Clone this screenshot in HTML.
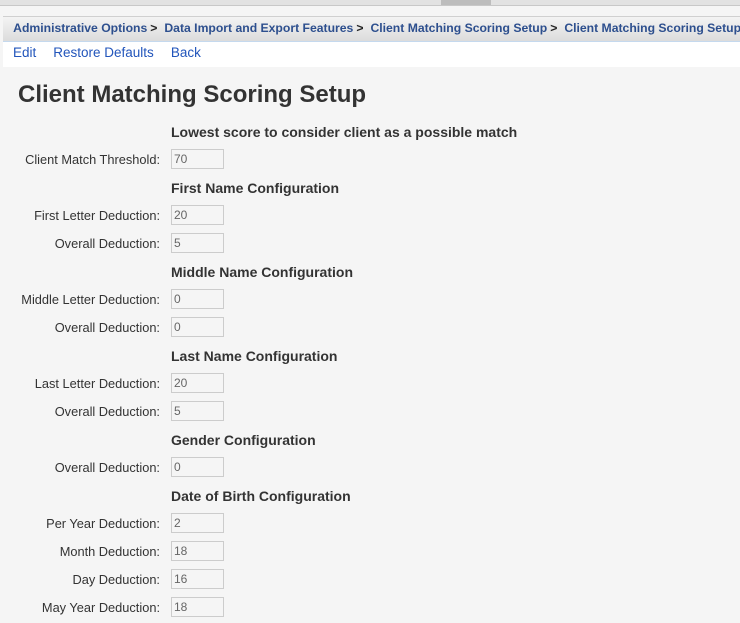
<!DOCTYPE html>
<html><head><style>
body{margin:0;width:740px;height:623px;background:#f5f5f5;font-family:"Liberation Sans",Arial,sans-serif;position:relative;overflow:hidden}
.top{position:absolute;left:0;top:0;width:740px;height:5px;background:#e2e2e2;border-bottom:1px solid #c8c8c8}
.tab{position:absolute;left:441px;top:0;width:50px;height:5px;background:#bdbdbd}
.bc{position:absolute;left:3px;top:16px;width:737px;height:24px;background:linear-gradient(#f4f4f4,#dcdcdc);border-top:1px solid #d0d0d0;border-bottom:2px solid #c5d9ee;font-size:12.2px;font-weight:bold;color:#2d4f8e;line-height:23px;white-space:nowrap;overflow:hidden}
.bc b{color:#222;margin:0 7px 0 3px}
.lk{position:absolute;left:3px;top:42px;width:737px;height:25px;background:#fff;font-size:13.5px;color:#2255bb;line-height:22px}
.lk span{margin-left:10px;margin-right:7px}
h1{position:absolute;left:18px;top:81px;margin:0;font-size:24px;font-weight:bold;color:#333}
.h{position:absolute;left:171px;font-size:14px;font-weight:bold;color:#333}
.l{position:absolute;right:580px;font-size:12.8px;color:#333}
.i{position:absolute;left:171px;height:18px;border:1px solid #ccc;background:#f5f5f5;font-size:12px;color:#666;line-height:18px;padding-left:2px;width:49px}
</style></head><body>
<div class="top"></div><div class="tab"></div>
<div class="bc">&nbsp;&nbsp;&nbsp;Administrative Options<b>&gt;</b>Data Import and Export Features<b>&gt;</b>Client Matching Scoring Setup<b>&gt;</b>Client Matching Scoring Setup</div>
<div class="lk"><span>Edit</span><span>Restore Defaults</span><span>Back</span></div>
<h1>Client Matching Scoring Setup</h1>
<div class="h" style="top:124px">Lowest score to consider client as a possible match</div>
<div class="l" style="top:152px">Client Match Threshold:</div><div class="i" style="top:149px">70</div>
<div class="h" style="top:180px">First Name Configuration</div>
<div class="l" style="top:208px">First Letter Deduction:</div><div class="i" style="top:205px">20</div>
<div class="l" style="top:236px">Overall Deduction:</div><div class="i" style="top:233px">5</div>
<div class="h" style="top:264px">Middle Name Configuration</div>
<div class="l" style="top:292px">Middle Letter Deduction:</div><div class="i" style="top:289px">0</div>
<div class="l" style="top:320px">Overall Deduction:</div><div class="i" style="top:317px">0</div>
<div class="h" style="top:348px">Last Name Configuration</div>
<div class="l" style="top:376px">Last Letter Deduction:</div><div class="i" style="top:373px">20</div>
<div class="l" style="top:404px">Overall Deduction:</div><div class="i" style="top:401px">5</div>
<div class="h" style="top:432px">Gender Configuration</div>
<div class="l" style="top:460px">Overall Deduction:</div><div class="i" style="top:457px">0</div>
<div class="h" style="top:488px">Date of Birth Configuration</div>
<div class="l" style="top:516px">Per Year Deduction:</div><div class="i" style="top:513px">2</div>
<div class="l" style="top:544px">Month Deduction:</div><div class="i" style="top:541px">18</div>
<div class="l" style="top:572px">Day Deduction:</div><div class="i" style="top:569px">16</div>
<div class="l" style="top:600px">May Year Deduction:</div><div class="i" style="top:597px">18</div>
</body></html>
